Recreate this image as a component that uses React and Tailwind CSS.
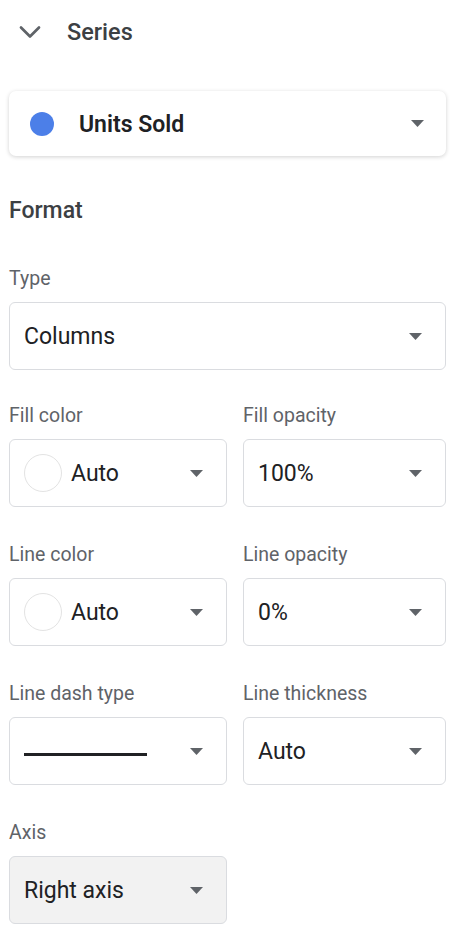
import { ChevronDown } from 'lucide-react'

function Caret() {
  return (
    <svg width="13" height="7" viewBox="0 0 13 7" className="shrink-0">
      <path d="M0 0h13L6.5 7z" fill="#5f6368" />
    </svg>
  )
}

function Select({ children, gray }) {
  return (
    <div
      className={`h-[68px] rounded-[6px] border border-[#dadce0] flex items-center justify-between pl-[14px] pr-[23px] ${gray ? 'bg-[#f2f2f2]' : 'bg-white'}`}
    >
      <div className="flex items-center text-[23px] text-[#202124] pt-[2px]">{children}</div>
      <Caret />
    </div>
  )
}

function Swatch({ label }) {
  return (
    <>
      <span className="w-[38px] h-[38px] rounded-full border border-[#e3e3e3] mr-[9px] -mt-[2px]" />
      {label}
    </>
  )
}

function Field({ label, children, top = 'mt-[35px]' }) {
  return (
    <div className={top}>
      <div className="h-[24px] leading-[24px] pt-[1px] text-[19.5px] text-[#5f6368]">{label}</div>
      <div className="mt-[12px]">{children}</div>
    </div>
  )
}

export default function App() {
  return (
    <div className="w-[474px] min-h-[949px] bg-white px-[9px] font-['Roboto',sans-serif]">
      <div className="h-[64px] flex items-center">
        <ChevronDown size={36} strokeWidth={1.8} color="#5f6368" className="ml-[3px]" />
        <span className="ml-[19px] pt-[2px] text-[23.5px] font-medium text-[#3c4043]">Series</span>
      </div>

      <div className="mt-[27px] w-[437px] h-[65px] rounded-[7px] bg-white shadow-[0_1px_4px_rgba(0,0,0,0.18)] flex items-center justify-between pl-[21px] pr-[22px]">
        <div className="flex items-center">
          <span className="w-[24px] h-[24px] rounded-full bg-[#4c7fe8]" />
          <span className="ml-[25px] pt-[3px] text-[23px] font-semibold text-[#202124]">Units Sold</span>
        </div>
        <Caret />
      </div>

      <div className="mt-[41px] h-[28px] leading-[28px] text-[23px] font-medium text-[#3c4043]">Format</div>

      <div className="w-[437px]">
        <Field label="Type" top="mt-[41px]">
          <Select>Columns</Select>
        </Field>
      </div>

      <div className="grid grid-cols-[218px_203px] gap-x-[16px]">
        <Field label="Fill color" top="mt-[33px]">
          <Select>
            <Swatch label="Auto" />
          </Select>
        </Field>
        <Field label="Fill opacity" top="mt-[33px]">
          <Select>100%</Select>
        </Field>

        <Field label="Line color">
          <Select>
            <Swatch label="Auto" />
          </Select>
        </Field>
        <Field label="Line opacity">
          <Select>0%</Select>
        </Field>

        <Field label="Line dash type">
          <Select>
            <span className="block w-[123px] h-[3px] bg-[#202124] mt-[4px]" />
          </Select>
        </Field>
        <Field label="Line thickness">
          <Select>Auto</Select>
        </Field>

        <Field label="Axis">
          <Select gray>Right axis</Select>
        </Field>
      </div>
    </div>
  )
}
